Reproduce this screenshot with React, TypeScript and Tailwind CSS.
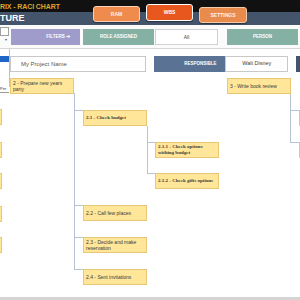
import React from "react";

type Node = { x: number; y: number; w?: number; h?: number; lines: string[]; serif?: boolean };

const TOP = 49;

const nodes: Node[] = [
  { x: 10, y: 78, lines: ["2 - Prepare new years", "party"] },
  { x: 227, y: 78, lines: ["3 - Write book review"] },
  { x: 83, y: 110, lines: ["2.1 - Check budget"], serif: true },
  { x: 155, y: 142, lines: ["2.1.1 - Check options", "withing budget"], serif: true },
  { x: 155, y: 173, lines: ["2.1.2 - Check gifts options"], serif: true },
  { x: 83, y: 205, lines: ["2.2 - Call few places"] },
  { x: 83, y: 237, lines: ["2.3 - Decide and make", "reservation"] },
  { x: 83, y: 269, lines: ["2.4 - Sent invitations"] },
  { x: -62, y: 109, lines: [""] },
  { x: -62, y: 142, lines: [""] },
  { x: -62, y: 173, lines: [""] },
  { x: -62, y: 206, lines: [""] },
  { x: -62, y: 237, lines: [""] },
  { x: 299, y: 110, lines: [""] },
  { x: 299, y: 142, lines: [""] },
];

type Line = { x: number; y: number; w: number; h: number };
const lines: Line[] = [
  { x: 74, y: 93, w: 1, h: 177 },
  { x: 74, y: 110, w: 9, h: 1 },
  { x: 74, y: 205, w: 9, h: 1 },
  { x: 74, y: 237, w: 9, h: 1 },
  { x: 74, y: 269, w: 9, h: 1 },
  { x: 147, y: 126, w: 1, h: 48 },
  { x: 147, y: 142, w: 8, h: 1 },
  { x: 147, y: 173, w: 8, h: 1 },
  { x: 290, y: 93, w: 1, h: 50 },
  { x: 290, y: 110, w: 9, h: 1 },
  { x: 290, y: 142, w: 9, h: 1 },
  { x: 9, y: 49, w: 1, h: 38 },
];

export default function App() {
  return (
    <div
      className="w-[300px] h-[300px] overflow-hidden bg-white relative flex flex-col"
      style={{ fontFamily: '"Liberation Sans", Arial, sans-serif' }}
    >
      {/* Header */}
      <div className="relative h-[25px] shrink-0">
        <div className="h-[12px] bg-[#111111] flex items-center">
          <span className="text-[7px] font-bold leading-none text-[#d9a62e] tracking-[-0.1px]">
            RIX - RACI CHART
          </span>
        </div>
        <div className="h-[13px] bg-[#44546a] flex items-center">
          <span className="text-[9px] font-bold leading-none text-white">TURE</span>
        </div>
        <div className="absolute left-[93px] top-[6px] w-[47px] h-[16px] rounded-[3px] bg-[#f08b4e] border border-[#f8d2b8] flex items-center justify-center shadow-[0_1px_1px_rgba(0,0,0,0.4)]">
          <span className="text-[5px] font-bold text-[#fff1e6] leading-none">RAM</span>
        </div>
        <div className="absolute left-[146px] top-[4px] w-[47px] h-[17px] rounded-[3px] bg-[#e8571d] border-[1.5px] border-white flex items-center justify-center shadow-[0_1px_1px_rgba(0,0,0,0.4)]">
          <span className="text-[5px] font-bold text-white leading-none">WBS</span>
        </div>
        <div className="absolute left-[199px] top-[7px] w-[48px] h-[16px] rounded-[3px] bg-[#e88b4d] border border-[#f4cba9] flex items-center justify-center shadow-[0_1px_1px_rgba(0,0,0,0.4)]">
          <span className="text-[5px] font-bold text-[#fff1e6] leading-none">SETTINGS</span>
        </div>
      </div>

      {/* Filter row */}
      <div className="h-[24px] shrink-0 flex items-start pt-[4px] border-b border-[#d6d6d6] bg-[#fbfbfb]">
        <div className="w-[10px] h-[17px] flex flex-col">
          <div className="w-[9px] h-[9px] -mt-[2px] bg-white border border-[#a0a0a0]" />
          <div className="w-[9px] h-[8px] flex items-center justify-end pr-[2px] text-[4px] text-[#555] leading-none">
            ▾
          </div>
        </div>
        <div className="ml-[1px] w-[69px] h-[16px] bg-[#9f9bca] flex items-center justify-end pr-[10px]">
          <span className="text-[4.5px] font-bold text-white leading-none">FILTERS ➔</span>
        </div>
        <div className="ml-[3px] w-[71px] h-[16px] bg-[#85b1a5] flex items-center justify-center">
          <span className="text-[4.5px] font-bold text-white leading-none">ROLE ASSIGNED</span>
        </div>
        <div className="ml-[1px] w-[63px] h-[16px] bg-white border border-[#d0d0d0] flex items-center justify-center">
          <span className="text-[5px] text-[#444] leading-none">All</span>
        </div>
        <div className="ml-[9px] w-[71px] h-[16px] bg-[#85b1a5] flex items-center justify-center">
          <span className="text-[4.5px] font-bold text-white leading-none">PERSON</span>
        </div>
      </div>

      {/* Main canvas */}
      <div className="relative flex-1">
        {/* project row */}
        <div className="flex items-start pt-[7px]">
          <div className="w-[10px] h-[6px] bg-[#1f64c8] mt-[0px]" />
          <div className="w-[137px] h-[16px] bg-white border border-[#c8c8c8] flex items-center pl-[10px]">
            <span className="text-[6px] text-[#595959] leading-none">My Project Name</span>
          </div>
          <div className="ml-[8px] w-[72px] h-[16px] bg-[#5a7394] flex items-center justify-end pr-[9px]">
            <span className="text-[4.5px] font-bold text-white leading-none">RESPONSIBLE</span>
          </div>
          <div className="w-[63px] h-[16px] bg-white border border-[#c8c8c8] flex items-center justify-center">
            <span className="text-[5.5px] text-[#404040] leading-none">Walt Disney</span>
          </div>
          <div className="ml-[8px] w-[4px] h-[16px] bg-[#44546a]" />
        </div>

        {/* "Per" cell */}
        <div className="absolute left-0 top-[38px] w-[9px] h-[6px] border-b border-[#9a9a9a] overflow-hidden">
          <span className="text-[4px] text-[#333] leading-none block">Per</span>
        </div>

        {lines.map((l, i) => (
          <div
            key={"l" + i}
            className="absolute bg-[#b7c2d2]"
            style={{ left: l.x, top: l.y - TOP, width: l.w, height: l.h }}
          />
        ))}

        {nodes.map((n, i) => (
          <div
            key={"n" + i}
            className="absolute bg-[#ffe699] border border-[#e9c775] px-[2px] flex flex-col justify-center"
            style={{ left: n.x, top: n.y - TOP, width: n.w ?? 64, height: n.h ?? 16 }}
          >
            {n.lines.map((t, j) => (
              <span
                key={j}
                className={
                  "block text-[5px] leading-[6px] whitespace-nowrap text-[#3a3a3a] " +
                  (n.serif ? "font-bold" : "")
                }
                style={n.serif ? { fontFamily: '"Liberation Serif", "Times New Roman", serif' } : undefined}
              >
                {t}
              </span>
            ))}
          </div>
        ))}
      </div>

      {/* bottom bar */}
      <div className="h-[3px] shrink-0 bg-[#d4d4d4]" />
    </div>
  );
}
